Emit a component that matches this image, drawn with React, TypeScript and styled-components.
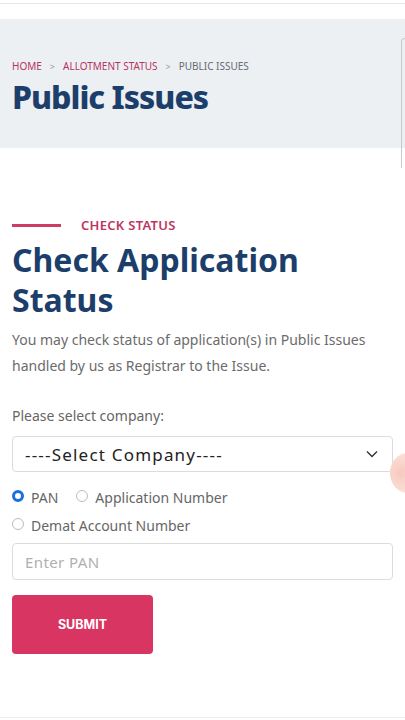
import { createGlobalStyle, styled } from 'styled-components';

const GlobalStyle = createGlobalStyle`
  * { box-sizing: border-box; }
  html, body {
    margin: 0;
    padding: 0;
    background: #fff;
    font-family: 'Noto Sans', 'Open Sans', sans-serif;
  }
`;

const Page = styled.div`
  position: relative;
  width: 405px;
  height: 720px;
  overflow: hidden;
  border-top: 3px solid #fff;
  display: flex;
  flex-direction: column;
`;

const TopBar = styled.div`
  height: 16px;
  border-top: 1px solid #e8e8e8;
`;

const Banner = styled.header`
  position: relative;
  height: 129px;
  background: #edf0f3;
  padding: 40px 12px 0;
`;

const ScrollEdge = styled.div`
  position: absolute;
  right: 0;
  top: 19px;
  bottom: -20px;
  width: 4px;
  border-left: 1px solid #c9c9c9;
  border-top: 1px solid #c9c9c9;
  border-top-left-radius: 4px;
`;

const Crumbs = styled.nav`
  display: flex;
  align-items: center;
  gap: 8px;
  font-size: 10px;
  text-transform: uppercase;
`;

const Crumb = styled.span<{ $active?: boolean }>`
  color: ${(p) => (p.$active ? '#666a74' : '#b5345f')};
`;

const Sep = styled.span`
  color: #999;
  font-size: 9px;
`;

const PageTitle = styled.h1`
  margin: 2px 0 0;
  font-size: 32px;
  font-weight: 800;
  letter-spacing: -1px;
  color: #1c3e6b;
`;

const Main = styled.main`
  padding: 68px 12px 0;
  flex: 1;
`;

const Eyebrow = styled.div`
  display: flex;
  align-items: center;
  gap: 20px;
  font-size: 13px;
  font-weight: 600;
  letter-spacing: 0.3px;
  color: #be355f;
`;

const Dash = styled.span`
  width: 49px;
  height: 3px;
  background: #cf3c63;
`;

const Heading = styled.h2`
  margin: 6px 0 0;
  font-size: 32px;
  line-height: 40px;
  font-weight: 700;
  color: #1c3e6b;
`;

const Lead = styled.p`
  margin: 7px 0 0;
  font-size: 14px;
  line-height: 26px;
  color: #6b6b6b;
`;

const Label = styled.div`
  margin-top: 27px;
  font-size: 14px;
  color: #666;
`;

const SelectBox = styled.div`
  margin-top: 11px;
  height: 36px;
  border: 1px solid #dcdcdc;
  border-radius: 4px;
  display: flex;
  align-items: center;
  justify-content: space-between;
  padding: 0 14px 0 12px;
  font-size: 17px;
  letter-spacing: 1.2px;
  color: #222;
`;

const Radios = styled.div`
  margin-top: 15px;
  display: flex;
  flex-wrap: wrap;
  column-gap: 18px;
  row-gap: 6px;
  width: 260px;
`;

const RadioItem = styled.label`
  display: flex;
  align-items: center;
  gap: 7px;
  font-size: 14px;
  color: #666;
  line-height: 22px;
`;

const Dot = styled.span<{ $on?: boolean }>`
  width: 12px;
  height: 12px;
  border-radius: 50%;
  margin-top: -5px;
  border: ${(p) => (p.$on ? '3px solid #1a6ee0' : '1px solid #bcbcbc')};
  background: #fff;
`;

const TextField = styled.input`
  display: block;
  margin-top: 6px;
  width: 100%;
  height: 37px;
  border: 1px solid #dcdcdc;
  border-radius: 4px;
  padding: 0 12px;
  font-family: inherit;
  font-size: 15px;
  letter-spacing: 0.4px;
  color: #333;
  &::placeholder { color: #b0b0b0; }
`;

const SubmitButton = styled.button`
  margin-top: 15px;
  width: 141px;
  height: 59px;
  border: none;
  border-radius: 4px;
  background: #d93562;
  color: #fff;
  font-family: Inter, 'Noto Sans', sans-serif;
  font-size: 12.5px;
  font-weight: 700;
`;

const Footer = styled.div`
  height: 3px;
  border-top: 1px solid #ececec;
`;

const TouchGlow = styled.div`
  position: absolute;
  left: 390px;
  top: 450px;
  width: 36px;
  height: 40px;
  border-radius: 50%;
  background: radial-gradient(circle at 30% 50%, #f7c9be 0%, #fbe2da 70%, rgba(255,255,255,0) 100%);
`;

const Chevron = () => (
  <svg width="12" height="8" viewBox="0 0 12 8" fill="none">
    <path d="M1 1.5l5 5 5-5" stroke="#333" strokeWidth="1.4" />
  </svg>
);

export default function App() {
  return (
    <>
      <GlobalStyle />
      <Page>
        <TopBar />
        <Banner>
          <ScrollEdge />
          <Crumbs>
            <Crumb>Home</Crumb>
            <Sep>&gt;</Sep>
            <Crumb>Allotment Status</Crumb>
            <Sep>&gt;</Sep>
            <Crumb $active>Public Issues</Crumb>
          </Crumbs>
          <PageTitle>Public Issues</PageTitle>
        </Banner>
        <Main>
          <Eyebrow>
            <Dash />
            CHECK STATUS
          </Eyebrow>
          <Heading>
            Check Application
            <br />
            Status
          </Heading>
          <Lead>
            You may check status of application(s) in Public Issues handled by us as Registrar to the Issue.
          </Lead>
          <Label>Please select company:</Label>
          <SelectBox>
            <span>----Select Company----</span>
            <Chevron />
          </SelectBox>
          <Radios>
            <RadioItem>
              <Dot $on />
              PAN
            </RadioItem>
            <RadioItem>
              <Dot />
              Application Number
            </RadioItem>
            <RadioItem>
              <Dot />
              Demat Account Number
            </RadioItem>
          </Radios>
          <TextField placeholder="Enter PAN" />
          <SubmitButton>SUBMIT</SubmitButton>
        </Main>
        <Footer />
        <TouchGlow />
      </Page>
    </>
  );
}
